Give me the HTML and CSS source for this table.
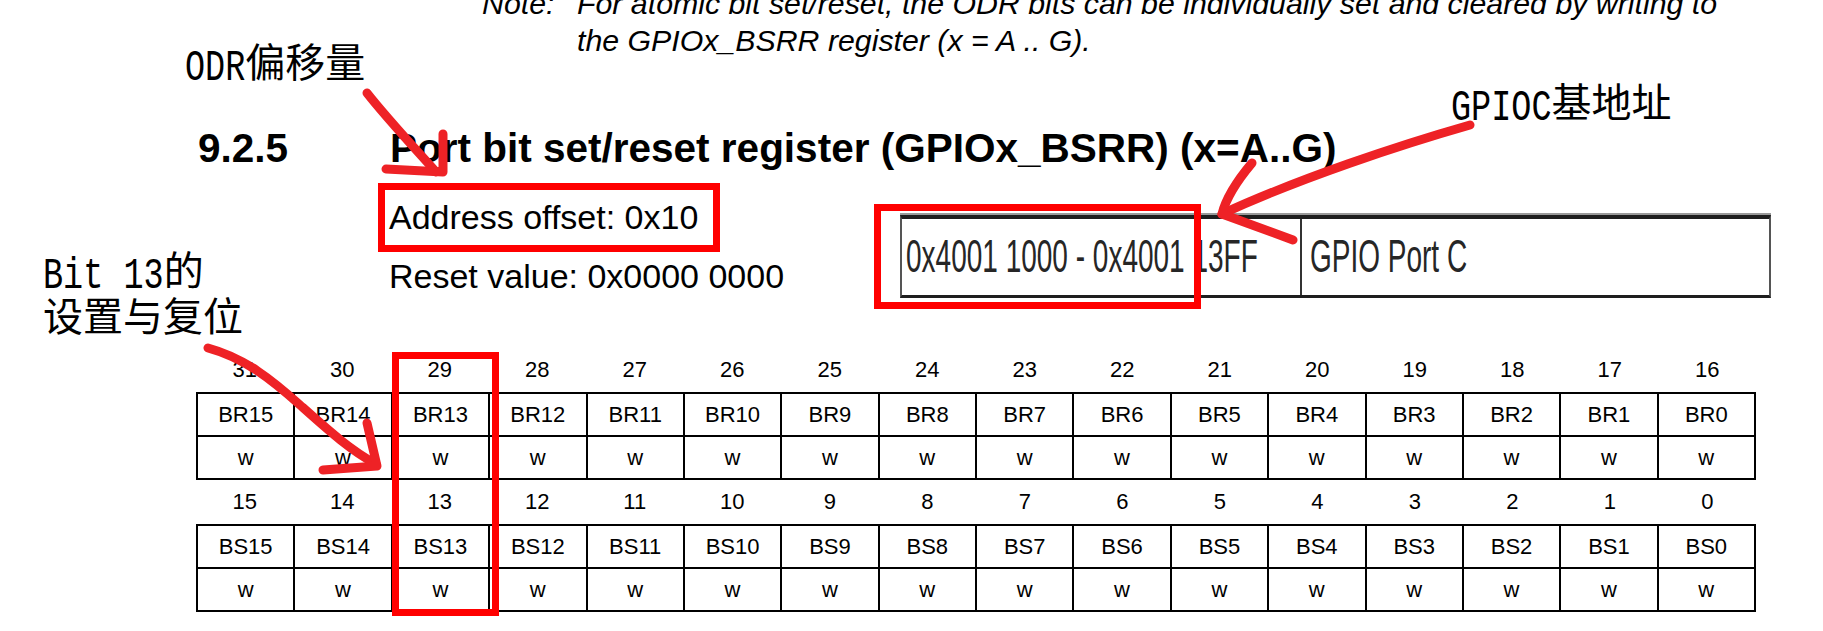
FILE: index.html
```html
<!DOCTYPE html>
<html lang="en">
<head>
<meta charset="utf-8">
<title>GPIOx_BSRR</title>
<link rel="stylesheet" href="styles.css">
</head>
<body>
<div class="page">
  <div class="note">
    <span class="note-label">Note:</span>
    <span class="note-text">For atomic bit set/reset, the ODR bits can be individually set and cleared by writing to<br>the GPIOx_BSRR register (x = A .. G).</span>
  </div>

  <h2 class="heading"><span class="sec-num">9.2.5</span><span class="sec-title">Port bit set/reset register (GPIOx_BSRR) (x=A..G)</span></h2>

  <div class="info-row">
    <div class="reg-info">
      <div class="info-line">Address offset: 0x10</div>
      <div class="info-line gap">Reset value: 0x0000 0000</div>
    </div>
    <div class="memmap">
      <div class="mm-cell mm-range"><span class="squash">0x4001 1000 - 0x4001 13FF</span></div>
      <div class="mm-cell mm-name"><span class="squash">GPIO Port C</span></div>
    </div>
  </div>

  <div class="bits">
    <div class="bit-nums">
      <span>31</span><span>30</span><span>29</span><span>28</span><span>27</span><span>26</span><span>25</span><span>24</span>
      <span>23</span><span>22</span><span>21</span><span>20</span><span>19</span><span>18</span><span>17</span><span>16</span>
    </div>
    <div class="bit-reg">
      <span>BR15</span><span>BR14</span><span>BR13</span><span>BR12</span><span>BR11</span><span>BR10</span><span>BR9</span><span>BR8</span>
      <span>BR7</span><span>BR6</span><span>BR5</span><span>BR4</span><span>BR3</span><span>BR2</span><span>BR1</span><span>BR0</span>
      <span>w</span><span>w</span><span>w</span><span>w</span><span>w</span><span>w</span><span>w</span><span>w</span>
      <span>w</span><span>w</span><span>w</span><span>w</span><span>w</span><span>w</span><span>w</span><span>w</span>
    </div>
    <div class="bit-nums">
      <span>15</span><span>14</span><span>13</span><span>12</span><span>11</span><span>10</span><span>9</span><span>8</span>
      <span>7</span><span>6</span><span>5</span><span>4</span><span>3</span><span>2</span><span>1</span><span>0</span>
    </div>
    <div class="bit-reg">
      <span>BS15</span><span>BS14</span><span>BS13</span><span>BS12</span><span>BS11</span><span>BS10</span><span>BS9</span><span>BS8</span>
      <span>BS7</span><span>BS6</span><span>BS5</span><span>BS4</span><span>BS3</span><span>BS2</span><span>BS1</span><span>BS0</span>
      <span>w</span><span>w</span><span>w</span><span>w</span><span>w</span><span>w</span><span>w</span><span>w</span>
      <span>w</span><span>w</span><span>w</span><span>w</span><span>w</span><span>w</span><span>w</span><span>w</span>
    </div>
  </div>

  <!-- annotations -->
  <div class="hand hand-odr"><span class="lat">ODR</span>偏移量</div>
  <div class="hand hand-gpioc"><span class="lat">GPIOC</span>基地址</div>
  <div class="hand hand-bit">
    <div class="hand-line"><span class="lat">Bit 13</span>的</div>
    <div class="hand-line">设置与复位</div>
  </div>

  <div class="anno-box box-offset"></div>
  <div class="anno-box box-addr"></div>
  <div class="anno-box box-bit"></div>

  <svg class="arrows" width="1823" height="631" viewBox="0 0 1823 631">
    <path d="M367,93 C385,116 410,143 436,172"/>
    <path d="M443,134 L443,172 L386,169"/>
    <path d="M1470,125 C1400,145 1300,178 1222,214"/>
    <path d="M1252,163 C1236,182 1226,198 1222,214 L1293,240"/>
    <path d="M208,348 C245,358 272,380 300,405 S350,450 376,464"/>
    <path d="M367,423 L377,466 L323,470"/>
  </svg>
</div>
</body>
</html>
```

FILE: styles.css
```css
html, body {
  margin: 0;
  padding: 0;
  background: #ffffff;
}

.page {
  position: relative;
  width: 1823px;
  height: 631px;
  overflow: hidden;
  font-family: "Liberation Sans", Arial, sans-serif;
  color: #000;
}

/* note */
.note {
  display: flex;
  margin: -15px 0 0 482px;
  font-style: italic;
  font-size: 30.3px;
  line-height: 37px;
  white-space: nowrap;
}
.note-label {
  width: 95px;
  flex: none;
}

/* heading */
.heading {
  display: flex;
  margin: 69px 0 0 198px;
  font-size: 40.5px;
  line-height: 40px;
  font-weight: bold;
  white-space: nowrap;
}
.sec-num {
  width: 192px;
  flex: none;
}

/* register info + memory map */
.info-row {
  display: flex;
  align-items: flex-start;
  margin: 29px 0 0 389px;
}
.reg-info {
  width: 511px;
  flex: none;
  font-size: 34px;
  line-height: 40px;
  white-space: nowrap;
}
.info-line.gap {
  margin-top: 19px;
}

.memmap {
  margin-top: 18px;
  width: 871px;
  height: 83px;
  box-sizing: border-box;
  display: grid;
  grid-template-columns: 400px 1fr;
  border-top: 4px solid #1e1e1e;
  border-bottom: 3px solid #1e1e1e;
  border-left: 2px solid #555;
  border-right: 2px solid #555;
  box-shadow: 0 -2px 0 #9a9a9a;
  color: #262626;
  font-size: 28px;
}
.mm-cell {
  display: flex;
  align-items: center;
  padding-left: 4px;
  white-space: nowrap;
}
.mm-range {
  border-right: 2px solid #333;
}
.mm-name {
  padding-left: 8px;
}
.squash {
  display: inline-block;
  transform: scaleY(1.62);
}

/* bit table */
.bits {
  margin: 50px 0 0 196px;
  width: 1560px;
  font-size: 22px;
}
.bit-nums {
  display: grid;
  grid-template-columns: repeat(16, 1fr);
  height: 44px;
  align-items: center;
  text-align: center;
}
.bit-reg {
  display: grid;
  grid-template-columns: repeat(16, 1fr);
  grid-auto-rows: 41px;
  gap: 2px;
  background: #000;
  border: 2px solid #000;
}
.bit-reg > span {
  background: #fff;
  display: flex;
  align-items: center;
  justify-content: center;
}

/* handwritten annotations */
.hand {
  position: absolute;
  font-family: "Noto Sans CJK SC", sans-serif;
  font-size: 40px;
  line-height: 40px;
  color: #000;
  white-space: nowrap;
}
.hand .lat {
  display: inline-block;
  font-family: "Liberation Mono", "Noto Sans CJK SC", monospace;
  font-size: 33.5px;
  line-height: 30px;
  transform: scaleY(1.3);
}
.hand-odr {
  left: 185px;
  top: 40px;
}
.hand-gpioc {
  left: 1451px;
  top: 80px;
}
.hand-bit {
  left: 43px;
  top: 248px;
  display: flex;
  flex-direction: column;
  gap: 3px;
}

.anno-box {
  position: absolute;
  box-sizing: border-box;
  border: 7px solid #ff0000;
}
.box-offset {
  left: 378px;
  top: 183px;
  width: 342px;
  height: 69px;
}
.box-addr {
  left: 874px;
  top: 204px;
  width: 327px;
  height: 105px;
}
.box-bit {
  left: 392px;
  top: 352px;
  width: 107px;
  height: 264px;
}

.arrows {
  position: absolute;
  left: 0;
  top: 0;
  pointer-events: none;
}
.arrows path {
  fill: none;
  stroke: #ee2226;
  stroke-width: 9;
  stroke-linecap: round;
  stroke-linejoin: round;
}
```
